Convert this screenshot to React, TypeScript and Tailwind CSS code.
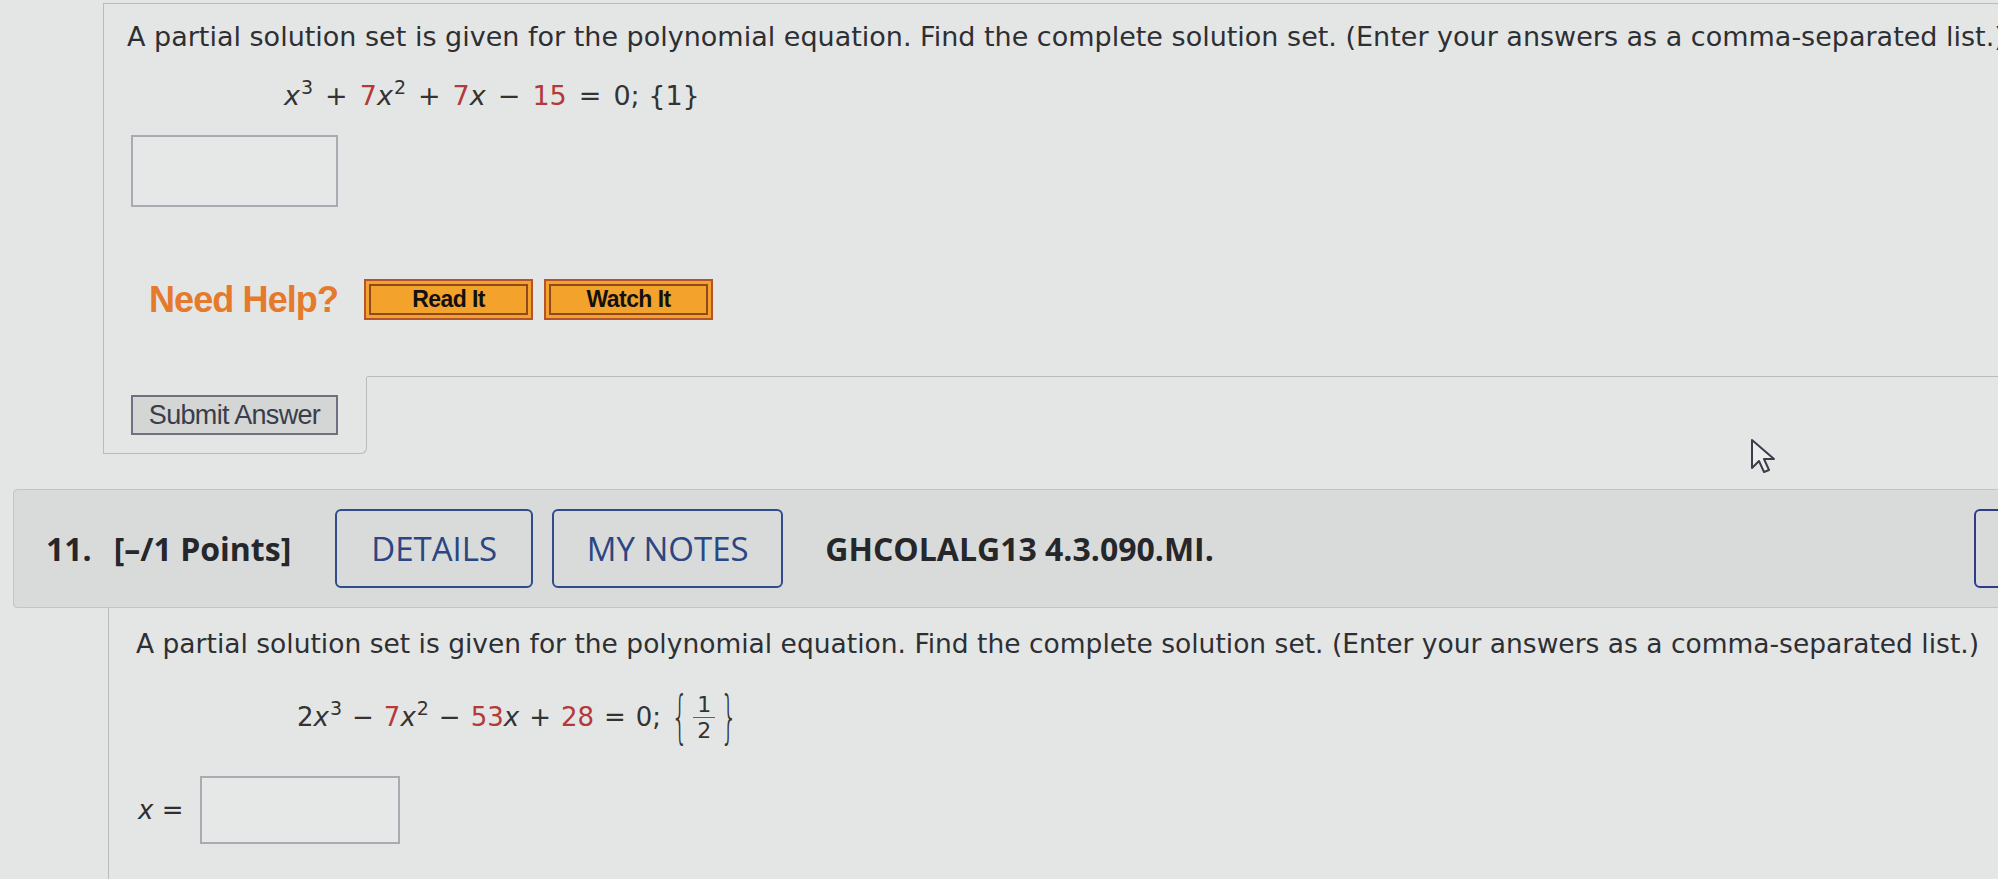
import React from 'react';

// WebAssign-style question page: tail of question 10 and the start of question 11.

const Red = ({ children }: { children: React.ReactNode }) => (
    <span className="text-[#b43a3a]">{children}</span>
);

const X = () => <span className="italic">x</span>;

const Sup = ({ children }: { children: React.ReactNode }) => (
    <sup className="text-[19px] relative -top-[11px] ml-[1px]">{children}</sup>
);

const Op = ({ children, tight }: { children: React.ReactNode; tight?: boolean }) => (
    <span className={tight ? 'mx-[10px]' : 'mx-[12px]'}>{children}</span>
);

const HelpButton = ({ label }: { label: string }) => (
    <button type="button" className="w-[169px] h-[41px] border-2 border-[#b4532c] bg-[#f3a22c] p-[3px]">
        <span className="flex h-full w-full items-center justify-center border-2 border-[#8f4a1c] font-['Liberation_Sans',sans-serif] text-[23px] font-bold text-[#111] tracking-tight">
            {label}
        </span>
    </button>
);

const QUESTION = 'A partial solution set is given for the polynomial equation. Find the complete solution set. (Enter your answers as a comma-separated list.)';

export default function App() {
    return (
        <div className="relative w-[1998px] h-[879px] overflow-hidden bg-[#e4e6e5] text-[#2e2f33] font-['DejaVu_Sans',sans-serif]">
            {/* question 10 tail */}
            <div className="mt-[3px] ml-[103px] border-l border-t border-[#b9bbbb] pl-[23px] pt-[14px] pb-[57px]">
                <p className="text-[27px] leading-[37px] whitespace-nowrap">{QUESTION}</p>
                <div className="mt-[22px] ml-[157px] text-[27px] leading-[37px] whitespace-nowrap text-[#333]">
                    <X /><Sup>3</Sup>
                    <Op>+</Op>
                    <Red>7</Red><X /><Sup>2</Sup>
                    <Op>+</Op>
                    <Red>7</Red><X />
                    <Op>−</Op>
                    <Red>15</Red>
                    <Op>=</Op>
                    0; {'{'}1{'}'}
                </div>
                <div className="mt-[21px] ml-[4px] w-[207px] h-[72px] border-2 border-[#a9abb3] bg-[#e6e8e8]" />
                <div className="mt-[72px] ml-[22px] h-[41px] flex items-center">
                    <span className="font-['Liberation_Sans',sans-serif] text-[36px] leading-[41px] font-bold text-[#e57a2c] tracking-tight">Need Help?</span>
                    <div className="ml-[26px] flex gap-[11px]">
                        <HelpButton label="Read It" />
                        <HelpButton label="Watch It" />
                    </div>
                </div>
            </div>
            <div className="ml-[103px] flex">
                <div className="w-[264px] h-[77px] border-l border-r border-b border-[#b9bbbb] rounded-br-md pl-[27px] pt-[18px]">
                    <button type="button" className="h-[40px] w-[207px] border-2 border-[#6d7183] bg-[#d4d5d5] font-['Liberation_Sans',sans-serif] text-[27px] leading-none text-[#3a3d4b] tracking-tight">
                        Submit Answer
                    </button>
                </div>
                <div className="flex-1 -mt-px border-t border-[#b9bbbb]" />
            </div>

            {/* question 11 header */}
            <div className="mt-[35px] ml-[13px] w-[1997px] h-[119px] flex items-center border border-[#c3c5c5] rounded-sm bg-[#d9dbda] pl-[32px] font-['Open_Sans',sans-serif] text-[#26272b]">
                <span className="text-[32px] font-bold">11.</span>
                <span className="ml-[22px] text-[32px] font-bold">[–/1 Points]</span>
                <button type="button" className="ml-[44px] w-[198px] h-[79px] border-2 border-[#2f4c8c] rounded-md text-[33px] text-[#2b4682]">DETAILS</button>
                <button type="button" className="ml-[19px] w-[231px] h-[79px] border-2 border-[#2f4c8c] rounded-md text-[33px] text-[#2b4682]">MY NOTES</button>
                <span className="ml-[42px] text-[32px] font-bold">GHCOLALG13 4.3.090.MI.</span>
                <div className="ml-auto w-[35px] h-[79px] border-2 border-[#303b8a] rounded-md" />
            </div>

            {/* question 11 body */}
            <div className="ml-[108px] h-[400px] border-l border-[#b9bbbb] pl-[27px] pt-[17px]">
                <p className="text-[26.5px] leading-[37px] whitespace-nowrap">{QUESTION}</p>
                <div className="mt-[20px] ml-[161px] h-[70px] flex items-center text-[26px] whitespace-nowrap text-[#333]">
                    <span>2<X /><Sup>3</Sup></span>
                    <Op tight>−</Op>
                    <span><Red>7</Red><X /><Sup>2</Sup></span>
                    <Op tight>−</Op>
                    <span><Red>53</Red><X /></span>
                    <Op tight>+</Op>
                    <Red>28</Red>
                    <Op tight>=</Op>
                    <span>0;</span>
                    <span className="ml-[10px] inline-block scale-y-[2.1] text-[27px] font-light">{'{'}</span>
                    <span className="mx-[5px] flex flex-col items-center text-[22px] leading-[25px]">
                        <span>1</span>
                        <span className="w-[22px] h-px bg-[#5a6170]" />
                        <span>2</span>
                    </span>
                    <span className="inline-block scale-y-[2.1] text-[27px] font-light">{'}'}</span>
                </div>
                <div className="mt-[24px] ml-[2px] flex items-center">
                    <span className="text-[26px]"><X /> =</span>
                    <div className="ml-[17px] w-[200px] h-[68px] border-2 border-[#a9abb3] bg-[#e6e8e8]" />
                </div>
            </div>

            {/* mouse pointer over the page */}
            <svg className="absolute left-[1750px] top-[438px]" width="28" height="40" viewBox="0 0 28 40">
                <path d="M2 2 L2 30 L9 23 L14 34 L19 32 L14 21 L24 21 Z" fill="#eceeee" stroke="#3b3d48" strokeWidth="2" strokeLinejoin="round" />
            </svg>
        </div>
    );
}
